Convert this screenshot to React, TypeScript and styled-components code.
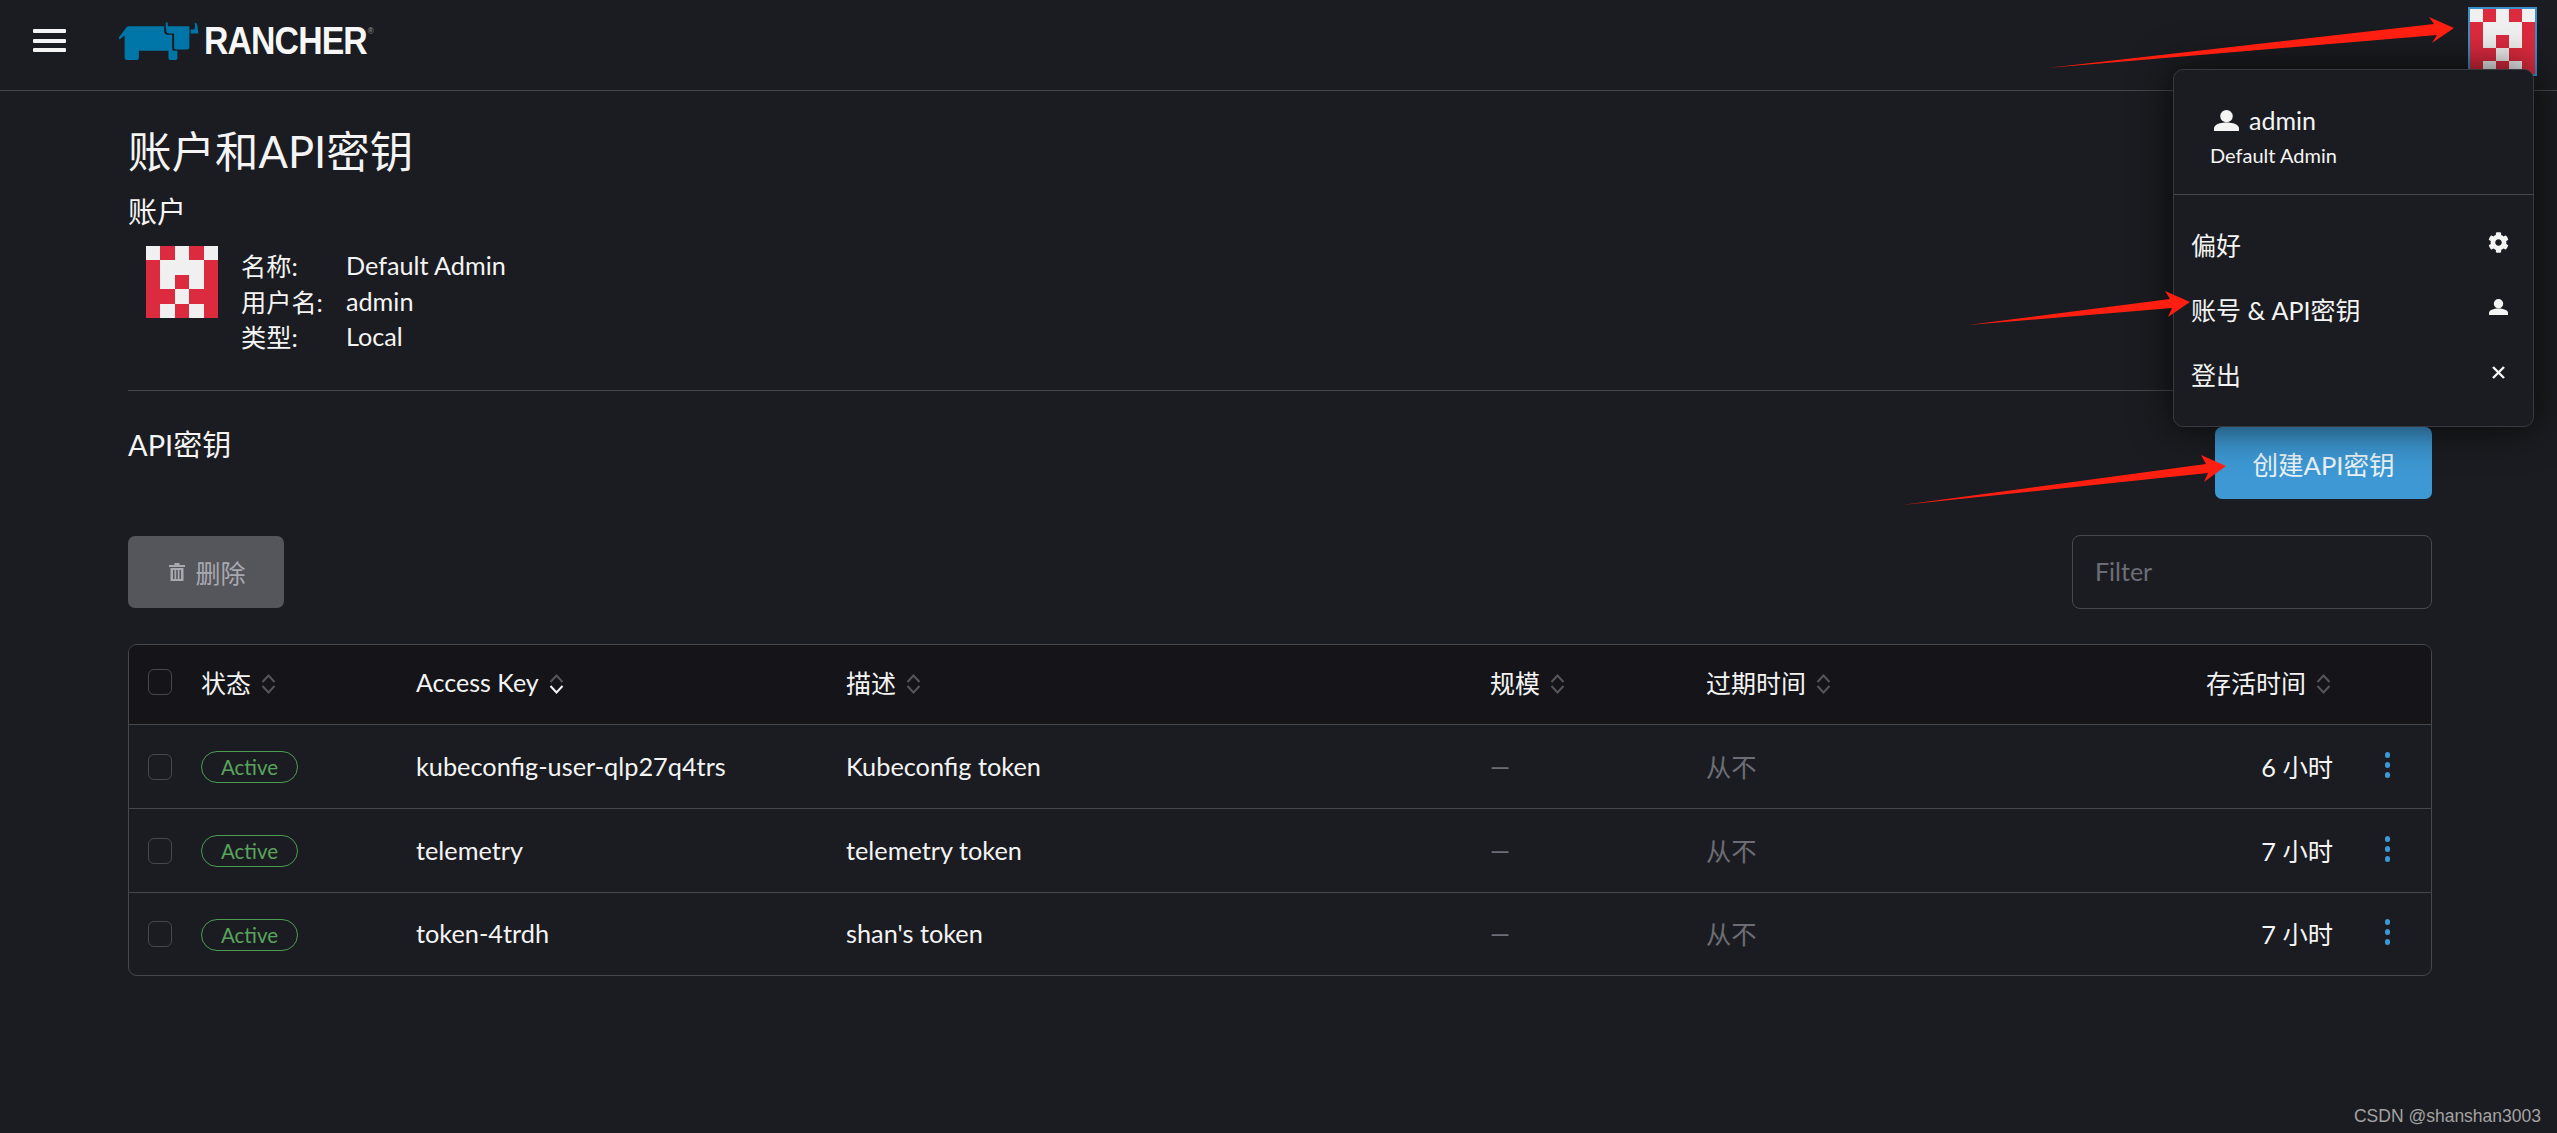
import React from 'react';
import styled, { createGlobalStyle } from 'styled-components';
import { FaCog } from 'react-icons/fa';

const GlobalStyle = createGlobalStyle`
  html, body {
    margin: 0;
    padding: 0;
    background: #1b1c21;
    color: #f4f4f4;
    font-family: Lato, "Noto Sans CJK SC", "Liberation Sans", sans-serif;
  }
  * { box-sizing: border-box; }
`;

const Page = styled.div`
  position: relative;
  width: 2557px;
  height: 1133px;
  overflow: hidden;
`;

const Header = styled.header`
  display: flex;
  align-items: flex-start;
  justify-content: space-between;
  height: 91px;
  padding: 7px 20px 0 33px;
  border-bottom: 1px solid #47484d;
`;

const Brand = styled.div`
  display: flex;
  align-items: flex-start;
`;

const Burger = styled.div`
  display: flex;
  flex-direction: column;
  justify-content: space-between;
  width: 33px;
  height: 23px;
  margin-top: 22px;
  span {
    display: block;
    height: 4px;
    background: #f4f4f4;
    border-radius: 1px;
  }
`;

const LogoMark = styled.svg`
  width: 83px;
  height: 42px;
  margin: 13px 0 0 51px;
`;

const LogoText = styled.div`
  margin: 15px 0 0 4px;
  width: 170px;
  font-family: "Liberation Sans", sans-serif;
  font-weight: 700;
  font-size: 38px;
  line-height: 38px;
  letter-spacing: -1px;
  color: #f7f7f7;
  white-space: nowrap;
  transform: scaleX(0.89);
  transform-origin: left center;
  sup {
    font-size: 9px;
    font-weight: 400;
    letter-spacing: 0;
    vertical-align: top;
    line-height: 18px;
    margin-left: 1px;
    color: #9a9a9a;
  }
`;

const TopAvatar = styled.div`
  border: 2px solid #3d8fc8;
  width: 69px;
  height: 69px;
`;

const Identicon = styled.div<{ $size: number }>`
  display: grid;
  grid-template-columns: repeat(5, 1fr);
  grid-template-rows: repeat(5, 1fr);
  width: ${(p) => p.$size}px;
  height: ${(p) => p.$size}px;
`;

const Pixel = styled.div<{ $on: boolean }>`
  background: ${(p) => (p.$on ? '#dc2a3e' : '#f0f0f0')};
`;

const Main = styled.main`
  padding: 36px 125px 0 128px;
`;

const Title = styled.h1`
  margin: 0;
  font-size: 43.5px;
  font-weight: 400;
  line-height: 48px;
`;

const SubTitle = styled.h2`
  margin: 0;
  font-size: 29px;
  font-weight: 400;
  line-height: 36px;
`;

const AccountHead = styled(SubTitle)`
  margin-top: 19px;
`;

const AccountRow = styled.section`
  display: flex;
  gap: 23px;
  margin: 16px 0 0 18px;
`;

const InfoList = styled.dl`
  display: grid;
  grid-template-columns: 105px auto;
  grid-auto-rows: 35.5px;
  align-items: center;
  margin: 1.5px 0 0;
  font-size: 25.2px;
  dt, dd { margin: 0; }
`;

const Divider = styled.hr`
  margin: 36px 0 0;
  border: 0;
  border-top: 1px solid #47484d;
`;

const KeyHead = styled.div`
  display: flex;
  justify-content: space-between;
  align-items: flex-start;
  padding-top: 36px;
`;

const PrimaryButton = styled.button`
  width: 217px;
  height: 72px;
  border: 0;
  border-radius: 7px;
  background: #3d98d3;
  color: #eaf2f7;
  font: inherit;
  font-size: 25.6px;
`;

const Toolbar = styled.div`
  display: flex;
  justify-content: space-between;
  align-items: center;
  margin-top: 36px;
`;

const DeleteButton = styled.button`
  display: flex;
  align-items: center;
  justify-content: center;
  gap: 10px;
  width: 156px;
  height: 72px;
  padding: 0 0 0 3px;
  border: 0;
  border-radius: 7px;
  background: #55565b;
  color: #a9a9b2;
  font: inherit;
  font-size: 25px;
`;

const FilterInput = styled.input`
  width: 360px;
  height: 74px;
  padding: 0 22px 3px;
  border: 1px solid #47484d;
  border-radius: 8px;
  background: transparent;
  font: inherit;
  font-size: 25px;
  &::placeholder {
    color: #6c6d75;
    opacity: 1;
  }
`;

const Table = styled.div`
  margin-top: 35px;
  border: 1px solid #47484d;
  border-radius: 9px;
  overflow: hidden;
  font-size: 25.3px;
`;

const Row = styled.div`
  display: grid;
  grid-template-columns: 72px 215px 430px 644px 216px 394px 233px 1fr;
  align-items: center;
  height: 84px;
  border-bottom: 1px solid #47484d;
  &:last-child {
    border-bottom: 0;
    height: 82px;
  }
`;

const HeadRow = styled(Row)`
  height: 80px;
  padding-bottom: 5px;
  background: #141419;
  font-size: 25px;
`;

const CheckCell = styled.div`
  padding-left: 19px;
`;

const CheckBox = styled.div`
  width: 24px;
  height: 26px;
  border: 1px solid #47484d;
  border-radius: 6px;
`;

const HeadCell = styled.div<{ $right?: boolean }>`
  display: flex;
  align-items: center;
  gap: 10px;
  justify-content: ${(p) => (p.$right ? 'flex-end' : 'flex-start')};
  padding-right: ${(p) => (p.$right ? '2px' : '0')};
  svg { margin-top: 4px; }
`;

const Badge = styled.span`
  display: inline-flex;
  align-items: center;
  justify-content: center;
  width: 97px;
  height: 32px;
  border: 1px solid #4d9a52;
  border-radius: 16px;
  color: #5aa35e;
  font-size: 20.5px;
`;

const TextCell = styled.div<{ $muted?: boolean; $right?: boolean }>`
  margin-top: -2px;
  color: ${(p) => (p.$muted ? '#6c6d75' : 'inherit')};
  text-align: ${(p) => (p.$right ? 'right' : 'left')};
`;

const Kebab = styled.div`
  display: flex;
  flex-direction: column;
  gap: 4px;
  width: 5px;
  margin: -4px 0 0 52px;
  span {
    display: block;
    height: 6px;
    border-radius: 3px;
    background: #3d98d3;
  }
`;

const Menu = styled.div`
  position: absolute;
  top: 69px;
  right: 23px;
  width: 361px;
  height: 358px;
  background: #1b1c21;
  border: 1px solid #38393e;
  border-radius: 10px;
  box-shadow: 0 0 40px rgba(0, 0, 0, 0.7);
`;

const MenuUser = styled.div`
  height: 125px;
  padding: 33px 0 0 36px;
  border-bottom: 1px solid #47484d;
`;

const MenuName = styled.div`
  display: flex;
  align-items: center;
  gap: 10px;
  margin-left: 4px;
  font-size: 25px;
  line-height: 34px;
`;

const MenuFull = styled.div`
  margin-top: 5px;
  font-size: 20px;
  line-height: 26px;
`;

const MenuList = styled.div`
  padding-top: 16px;
`;

const MenuItem = styled.div`
  display: flex;
  align-items: center;
  justify-content: space-between;
  height: 65px;
  padding: 0 24px 0 17px;
  font-size: 25px;
`;

const MenuIcon = styled.span`
  display: flex;
  justify-content: center;
  width: 22px;
  margin-top: -3px;
`;

const Arrows = styled.svg`
  position: absolute;
  inset: 0;
  width: 2557px;
  height: 1133px;
  pointer-events: none;
`;

const Watermark = styled.div`
  position: absolute;
  right: 16px;
  bottom: 6px;
  color: #a3a3a3;
  font-family: "Liberation Sans", sans-serif;
  font-size: 17.5px;
`;

const avatarCells = [0, 1, 0, 1, 0, 1, 0, 0, 0, 1, 1, 0, 1, 0, 1, 1, 1, 0, 1, 1, 1, 0, 1, 0, 1];

const keys = [
  { name: 'kubeconfig-user-qlp27q4trs', desc: 'Kubeconfig token', age: '6 小时' },
  { name: 'telemetry', desc: 'telemetry token', age: '7 小时' },
  { name: 'token-4trdh', desc: "shan's token", age: '7 小时' },
];

function Avatar({ size }: { size: number }) {
  return (
    <Identicon $size={size}>
      {avatarCells.map((on, i) => (
        <Pixel key={i} $on={on === 1} />
      ))}
    </Identicon>
  );
}

function Logo() {
  return (
    <LogoMark viewBox="50 60 250 125">
      <path
        fill="#0075a8"
        d="M55 113 L78 82 Q80 78 86 78 L192 78 L192 92 Q192 104 204 104 L216 104 L216 145 Q216 152 224 152 L232 152 L232 172 Q232 180 225 180 L212 180 Q205 180 205 172 L205 152 L116 152 L116 172 Q116 180 108 180 L82 180 Q73 180 73 172 L73 105 L58 118 Z"
      />
      <path
        fill="#0075a8"
        d="M198 78 L268 78 L268 140 Q268 148 260 148 L228 148 Q222 148 222 142 L222 100 L208 100 Q198 100 198 90 Z"
      />
      <path fill="#0075a8" d="M197 67 L203 67 L203 80 L197 86 Z" />
      <path fill="#0075a8" d="M284 67 Q290 67 292 75 L295 100 L272 100 L272 88 L282 88 Q287 84 284 67 Z" />
    </LogoMark>
  );
}

function UserIcon({ width }: { width: number }) {
  return (
    <svg width={width} height={(width * 21) / 25} viewBox="0 0 25 21" fill="#f4f4f4">
      <circle cx="12.5" cy="6.2" r="6.2" />
      <path d="M0 21 V18.5 C0 14.5 6 12.5 12.5 12.5 S25 14.5 25 18.5 V21 Z" />
    </svg>
  );
}

function CloseIcon() {
  return (
    <svg width="13" height="13" viewBox="0 0 13 13" stroke="#f4f4f4" strokeWidth="2.4">
      <path d="M1 1 L12 12 M12 1 L1 12" />
    </svg>
  );
}

function TrashIcon() {
  return (
    <svg width="16" height="18" viewBox="0 0 16 18" fill="#a9a9b2">
      <path d="M5.5 0 H10.5 V2 H16 V4 H0 V2 H5.5 Z" />
      <path d="M1.5 5 H14.5 V18 H1.5 Z M4 7 V16 H5.5 V7 Z M7.2 7 V16 H8.8 V7 Z M10.5 7 V16 H12 V7 Z" fillRule="evenodd" />
    </svg>
  );
}

function SortIcon({ active }: { active?: boolean }) {
  return (
    <svg width="15" height="20" viewBox="0 0 15 20" fill="none" strokeWidth="2">
      <path d="M1.5 8 L7.5 1.5 L13.5 8" stroke="#55565c" />
      <path d="M1.5 12 L7.5 18.5 L13.5 12" stroke={active ? '#f4f4f4' : '#55565c'} />
    </svg>
  );
}

function App() {
  return (
    <Page>
      <GlobalStyle />
      <Header>
        <Brand>
          <Burger>
            <span />
            <span />
            <span />
          </Burger>
          <Logo />
          <LogoText>
            RANCHER<sup>®</sup>
          </LogoText>
        </Brand>
        <TopAvatar>
          <Avatar size={65} />
        </TopAvatar>
      </Header>

      <Main>
        <Title>账户和API密钥</Title>
        <AccountHead>账户</AccountHead>
        <AccountRow>
          <Avatar size={72} />
          <InfoList>
            <dt>名称:</dt>
            <dd>Default Admin</dd>
            <dt>用户名:</dt>
            <dd>admin</dd>
            <dt>类型:</dt>
            <dd>Local</dd>
          </InfoList>
        </AccountRow>
        <Divider />

        <KeyHead>
          <SubTitle>API密钥</SubTitle>
          <PrimaryButton>创建API密钥</PrimaryButton>
        </KeyHead>

        <Toolbar>
          <DeleteButton>
            <TrashIcon />
            删除
          </DeleteButton>
          <FilterInput placeholder="Filter" />
        </Toolbar>

        <Table>
          <HeadRow>
            <CheckCell>
              <CheckBox />
            </CheckCell>
            <HeadCell>
              状态 <SortIcon />
            </HeadCell>
            <HeadCell>
              Access Key <SortIcon active />
            </HeadCell>
            <HeadCell>
              描述 <SortIcon />
            </HeadCell>
            <HeadCell>
              规模 <SortIcon />
            </HeadCell>
            <HeadCell>
              过期时间 <SortIcon />
            </HeadCell>
            <HeadCell $right>
              存活时间 <SortIcon />
            </HeadCell>
            <div />
          </HeadRow>
          {keys.map((k) => (
            <Row key={k.name}>
              <CheckCell>
                <CheckBox />
              </CheckCell>
              <div>
                <Badge>Active</Badge>
              </div>
              <TextCell>{k.name}</TextCell>
              <TextCell>{k.desc}</TextCell>
              <TextCell $muted>—</TextCell>
              <TextCell $muted>从不</TextCell>
              <TextCell $right>{k.age}</TextCell>
              <Kebab>
                <span />
                <span />
                <span />
              </Kebab>
            </Row>
          ))}
        </Table>
      </Main>

      <Menu>
        <MenuUser>
          <MenuName>
            <UserIcon width={25} />
            admin
          </MenuName>
          <MenuFull>Default Admin</MenuFull>
        </MenuUser>
        <MenuList>
          <MenuItem>
            偏好
            <MenuIcon>
              <FaCog size={21} color="#f4f4f4" />
            </MenuIcon>
          </MenuItem>
          <MenuItem>
            账号 &amp; API密钥
            <MenuIcon>
              <UserIcon width={19} />
            </MenuIcon>
          </MenuItem>
          <MenuItem>
            登出
            <MenuIcon>
              <CloseIcon />
            </MenuIcon>
          </MenuItem>
        </MenuList>
      </Menu>

      <Arrows viewBox="0 0 2557 1133">
        <path fill="#fe1f10" d="M2047 68 L2434 24 L2429 17 L2454 28 L2432 43 L2437 35 Z" />
        <path fill="#fe1f10" d="M1968 325 L2170 299 L2165 291 L2190 302 L2168 317 L2172 308 Z" />
        <path fill="#fe1f10" d="M1902 505 L2206 464 L2201 455 L2226 466 L2204 482 L2208 473 Z" />
      </Arrows>

      <Watermark>CSDN @shanshan3003</Watermark>
    </Page>
  );
}

export default App;
